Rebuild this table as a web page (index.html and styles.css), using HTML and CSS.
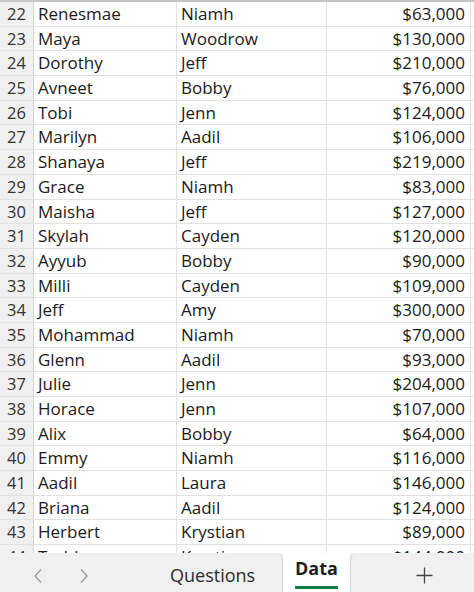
FILE: index.html
```html
<!DOCTYPE html>
<html>
<head>
<meta charset="utf-8">
<link rel="stylesheet" href="styles.css">
</head>
<body>
<div class="app">
  <div class="grid">
    <div class="row"><div class="rh">22</div><div class="c">Renesmae</div><div class="c">Niamh</div><div class="c num">$63,000</div><div class="c"></div></div>
    <div class="row"><div class="rh">23</div><div class="c">Maya</div><div class="c">Woodrow</div><div class="c num">$130,000</div><div class="c"></div></div>
    <div class="row"><div class="rh">24</div><div class="c">Dorothy</div><div class="c">Jeff</div><div class="c num">$210,000</div><div class="c"></div></div>
    <div class="row"><div class="rh">25</div><div class="c">Avneet</div><div class="c">Bobby</div><div class="c num">$76,000</div><div class="c"></div></div>
    <div class="row"><div class="rh">26</div><div class="c">Tobi</div><div class="c">Jenn</div><div class="c num">$124,000</div><div class="c"></div></div>
    <div class="row"><div class="rh">27</div><div class="c">Marilyn</div><div class="c">Aadil</div><div class="c num">$106,000</div><div class="c"></div></div>
    <div class="row"><div class="rh">28</div><div class="c">Shanaya</div><div class="c">Jeff</div><div class="c num">$219,000</div><div class="c"></div></div>
    <div class="row"><div class="rh">29</div><div class="c">Grace</div><div class="c">Niamh</div><div class="c num">$83,000</div><div class="c"></div></div>
    <div class="row"><div class="rh">30</div><div class="c">Maisha</div><div class="c">Jeff</div><div class="c num">$127,000</div><div class="c"></div></div>
    <div class="row"><div class="rh">31</div><div class="c">Skylah</div><div class="c">Cayden</div><div class="c num">$120,000</div><div class="c"></div></div>
    <div class="row"><div class="rh">32</div><div class="c">Ayyub</div><div class="c">Bobby</div><div class="c num">$90,000</div><div class="c"></div></div>
    <div class="row"><div class="rh">33</div><div class="c">Milli</div><div class="c">Cayden</div><div class="c num">$109,000</div><div class="c"></div></div>
    <div class="row"><div class="rh">34</div><div class="c">Jeff</div><div class="c">Amy</div><div class="c num">$300,000</div><div class="c"></div></div>
    <div class="row"><div class="rh">35</div><div class="c">Mohammad</div><div class="c">Niamh</div><div class="c num">$70,000</div><div class="c"></div></div>
    <div class="row"><div class="rh">36</div><div class="c">Glenn</div><div class="c">Aadil</div><div class="c num">$93,000</div><div class="c"></div></div>
    <div class="row"><div class="rh">37</div><div class="c">Julie</div><div class="c">Jenn</div><div class="c num">$204,000</div><div class="c"></div></div>
    <div class="row"><div class="rh">38</div><div class="c">Horace</div><div class="c">Jenn</div><div class="c num">$107,000</div><div class="c"></div></div>
    <div class="row"><div class="rh">39</div><div class="c">Alix</div><div class="c">Bobby</div><div class="c num">$64,000</div><div class="c"></div></div>
    <div class="row"><div class="rh">40</div><div class="c">Emmy</div><div class="c">Niamh</div><div class="c num">$116,000</div><div class="c"></div></div>
    <div class="row"><div class="rh">41</div><div class="c">Aadil</div><div class="c">Laura</div><div class="c num">$146,000</div><div class="c"></div></div>
    <div class="row"><div class="rh">42</div><div class="c">Briana</div><div class="c">Aadil</div><div class="c num">$124,000</div><div class="c"></div></div>
    <div class="row"><div class="rh">43</div><div class="c">Herbert</div><div class="c">Krystian</div><div class="c num">$89,000</div><div class="c"></div></div>
    <div class="row"><div class="rh">44</div><div class="c">Todd</div><div class="c">Krystian</div><div class="c num">$144,000</div><div class="c"></div></div>
  </div>
  <div class="tabbar">
    <div class="left">
      <div class="nav">
        <svg class="arrow" width="10" height="16" viewBox="0 0 10 16"><path d="M8 1.5 L2 8 L8 14.5" fill="none" stroke="#9a9a9a" stroke-width="1.3"/></svg>
        <svg class="arrow" width="10" height="16" viewBox="0 0 10 16"><path d="M2 1.5 L8 8 L2 14.5" fill="none" stroke="#9a9a9a" stroke-width="1.3"/></svg>
      </div>
      <div class="tab">Questions</div>
    </div>
    <div class="tab active"><span class="label">Data</span></div>
    <div class="add">
      <svg width="17" height="17" viewBox="0 0 17 17"><path d="M8.5 0.5 V16.5 M0.5 8.5 H16.5" stroke="#444" stroke-width="1.3" fill="none"/></svg>
    </div>
  </div>
</div>
</body>
</html>
```

FILE: styles.css
```css
html, body {
  margin: 0;
  padding: 0;
  background: #ffffff;
}
.app {
  width: 474px;
  height: 592px;
  display: flex;
  flex-direction: column;
  overflow: hidden;
  font-family: "Open Sans", "Noto Sans", sans-serif;
  color: #1a1a1a;
}
.grid {
  flex: 1;
  overflow: hidden;
  border-top: 2px solid #c6c6c6;
  min-height: 0;
}
.row {
  display: grid;
  grid-template-columns: 34px 143px 150px 144px 1fr;
  height: 24.7px;
}
.rh, .c {
  box-sizing: border-box;
  border-bottom: 1px solid #e1e1e1;
  border-right: 1px solid #e1e1e1;
  line-height: 23.7px;
  white-space: nowrap;
  overflow: hidden;
}
.rh {
  background: #f0f0f0;
  border-right-color: #d2d2d2;
  border-bottom-color: #e2e2e2;
  text-align: center;
  font-size: 16.5px;
  color: #333333;
}
.c {
  font-size: 17px;
  padding: 0 5px 0 4px;
}
.num {
  text-align: right;
}
.tabbar {
  height: 39px;
  flex: none;
  display: flex;
  background: #f0f0f0;
}
.left {
  width: 283px;
  display: flex;
  box-sizing: border-box;
  border-right: 1px solid #d4d4d4;
  border-top-right-radius: 7px;
  background: #f0f0f0;
}
.nav {
  display: flex;
  gap: 36px;
  padding-left: 33px;
  padding-top: 15px;
  width: 112px;
  box-sizing: border-box;
}
.arrow {
  display: block;
}
.tab {
  font-size: 18px;
  color: #2b2b2b;
  padding-left: 58px;
  padding-top: 9px;
  line-height: 27px;
}
.tab.active {
  background: #ffffff;
  width: 67px;
  box-sizing: border-box;
  padding: 2px 0 0 12px;
  font-weight: 700;
  color: #1f1f1f;
}
.tab.active .label {
  display: inline-block;
  line-height: 27px;
  border-bottom: 3px solid #137a43;
  border-radius: 1px;
  padding-bottom: 4px;
}
.add {
  flex: 1;
  background: #f0f0f0;
  border-left: 1px solid #d4d4d4;
  border-top-left-radius: 7px;
  display: flex;
  justify-content: flex-start;
  padding-top: 14px;
  padding-left: 65px;
  box-sizing: border-box;
}
.add svg {
  display: block;
}
```
